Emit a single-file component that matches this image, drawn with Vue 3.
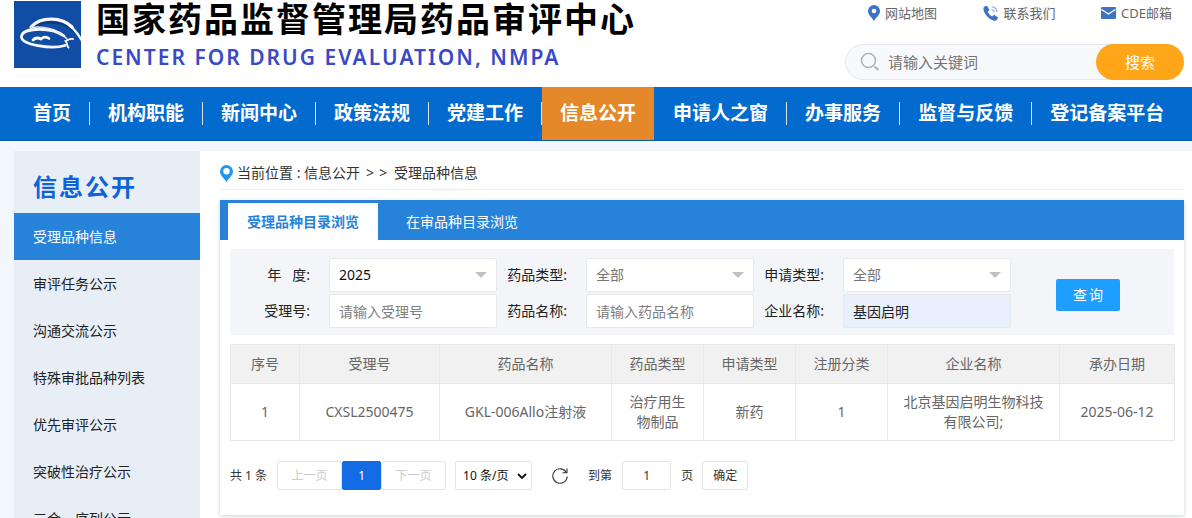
<script setup>
import { ref } from 'vue'

const navItems = ['首页', '机构职能', '新闻中心', '政策法规', '党建工作', '信息公开', '申请人之窗', '办事服务', '监督与反馈', '登记备案平台']
const activeNav = '信息公开'

const sideItems = ['受理品种信息', '审评任务公示', '沟通交流公示', '特殊审批品种列表', '优先审评公示', '突破性治疗公示', '三合一序列公示']
const activeSide = '受理品种信息'

const tabs = ['受理品种目录浏览', '在审品种目录浏览']
const activeTab = ref(0)

const keyword = ref('')
const year = ref('2025')
const drugType = ref('全部')
const applyType = ref('全部')
const acceptNo = ref('')
const drugName = ref('')
const company = ref('基因启明')
const pageSize = ref('10 条/页')
const pageNo = ref('1')

const columns = ['序号', '受理号', '药品名称', '药品类型', '申请类型', '注册分类', '企业名称', '承办日期']
const rows = [
  ['1', 'CXSL2500475', 'GKL-006Allo注射液', '治疗用生物制品', '新药', '1', '北京基因启明生物科技有限公司;', '2025-06-12'],
]
</script>

<template>
  <div class="page">
    <header class="header">
      <svg class="logo" viewBox="0 0 70 67" aria-hidden="true">
        <rect width="67" height="67" fill="#114da4" />
        <g fill="none" stroke-linecap="round">
          <path d="M17 28C29 17 50 19 60 29" stroke="#0a3a80" stroke-width="4" />
          <path d="M17 26C27 15 48 16 58 26" stroke="#f6f8fc" stroke-width="3.200" />
          <path d="M50 20.500C58 25 63 31 67.500 39" stroke="#fff" stroke-width="2.400" />
          <path d="M17 26.500C28 25 43 27 53 38" stroke="#d9e3f3" stroke-width="1.600" />
          <path d="M50 35C38 26 10 26 7.500 35C6 44 38 48.500 51 44.500" stroke="#f6f8fc" stroke-width="2.800" />
          <path d="M59 38C56 37.500 54 39 51.500 40C53.500 42 52.500 44.500 54.500 46.500" stroke="#fff" stroke-width="1.800" />
          <path d="M19 39C22 36 25 37 27 38C30 35.500 33 36 35 37.500" stroke="#fff" stroke-width="2.800" />
        </g>
      </svg>
      <div class="brand">
        <h1>国家药品监督管理局药品审评中心</h1>
        <p>CENTER FOR DRUG EVALUATION, NMPA</p>
      </div>
      <div class="tools">
        <div class="quick">
          <a href="#">
            <svg width="12" height="16" viewBox="0 0 12 16"><path d="M6 0a6 6 0 0 1 6 6c0 4-4 6.500-6 10C4 12.500 0 10 0 6a6 6 0 0 1 6-6Z" fill="#3d73c2" /><circle cx="6" cy="6" r="2.300" fill="#fff" /></svg>
            网站地图
          </a>
          <a href="#">
            <svg width="16" height="16" viewBox="0 0 16 16"><path d="M1.500 1.500 4 .8 6.500 5 4.800 6.800c.8 2 2.400 3.600 4.300 4.600l2-1.600 4 2.700-1.200 2.400c-.6.900-2 1-3.600.5C5.500 14 1.200 9 .5 4.500.3 3 .7 2 1.500 1.500Z" fill="#3d73c2" /><path d="M8.500 4.300c1.500.3 2.500 1.400 2.700 2.900M8.700 1.600c3 .4 5 2.500 5.200 5.400" fill="none" stroke="#8fb0de" stroke-width="1.300" /></svg>
            联系我们
          </a>
          <a href="#">
            <svg width="15" height="12" viewBox="0 0 15 12"><rect width="15" height="12" rx="1" fill="#3d73c2" /><path d="m.5 2.500 7 4.500 7-4.500" fill="none" stroke="#fff" stroke-width="1.300" /></svg>
            CDE邮箱
          </a>
        </div>
        <form class="search" @submit.prevent>
          <svg width="20" height="20" viewBox="0 0 20 20" aria-hidden="true"><circle cx="8.500" cy="8.500" r="7" fill="none" stroke="#b3b3b3" stroke-width="1.600" /><path d="m14.500 14.500 4 3.500" stroke="#b3b3b3" stroke-width="2.200" /></svg>
          <input v-model="keyword" type="text" placeholder="请输入关键词" aria-label="请输入关键词" />
          <button type="submit">搜索</button>
        </form>
      </div>
    </header>

    <nav class="nav">
      <a v-for="item in navItems" :key="item" href="#" :class="{ active: item === activeNav }">{{ item }}</a>
    </nav>

    <div class="body">
      <aside class="side">
        <h2>信息公开</h2>
        <a v-for="item in sideItems" :key="item" href="#" :class="{ active: item === activeSide }">{{ item }}</a>
      </aside>

      <main class="main">
        <div class="crumb">
          <svg width="13" height="17" viewBox="0 0 13 17" aria-hidden="true"><path d="M6.500 0A6.500 6.500 0 0 1 13 6.500C13 10.500 9 13 6.500 17 4 13 0 10.500 0 6.500A6.500 6.500 0 0 1 6.500 0Z" fill="#2196ee" /><circle cx="6.500" cy="6.300" r="3.200" fill="#fff" /></svg>
          <span>当前位置 : <a href="#">信息公开</a></span>
          <span class="arrow first">&gt;</span>
          <span class="arrow">&gt;</span>
          <a href="#">受理品种信息</a>
        </div>

        <section class="panel">
          <div class="tabs">
            <button v-for="(tab, i) in tabs" :key="tab" type="button" :class="{ active: i === activeTab }" @click="activeTab = i">{{ tab }}</button>
          </div>

          <form class="filters" @submit.prevent>
            <div class="fields">
              <div class="field">
                <label for="year">年&nbsp;&nbsp;&nbsp;度:</label>
                <div class="select">
                  <select id="year" v-model="year" class="chosen"><option>2025</option></select>
                  <svg width="12" height="6" viewBox="0 0 12 6"><path d="M0 0h12L6 6Z" fill="#c2c2c2" /></svg>
                </div>
              </div>
              <div class="field">
                <label for="drug-type">药品类型:</label>
                <div class="select">
                  <select id="drug-type" v-model="drugType"><option>全部</option></select>
                  <svg width="12" height="6" viewBox="0 0 12 6"><path d="M0 0h12L6 6Z" fill="#c2c2c2" /></svg>
                </div>
              </div>
              <div class="field">
                <label for="apply-type">申请类型:</label>
                <div class="select">
                  <select id="apply-type" v-model="applyType"><option>全部</option></select>
                  <svg width="12" height="6" viewBox="0 0 12 6"><path d="M0 0h12L6 6Z" fill="#c2c2c2" /></svg>
                </div>
              </div>
              <div class="field">
                <label for="accept-no">受理号:</label>
                <input id="accept-no" v-model="acceptNo" type="text" placeholder="请输入受理号" />
              </div>
              <div class="field">
                <label for="drug-name">药品名称:</label>
                <input id="drug-name" v-model="drugName" type="text" placeholder="请输入药品名称" />
              </div>
              <div class="field">
                <label for="company">企业名称:</label>
                <input id="company" v-model="company" type="text" class="filled" />
              </div>
            </div>
            <button class="query" type="submit">查询</button>
          </form>

          <table class="grid">
            <colgroup>
              <col class="c-no" /><col class="c-accept" /><col class="c-name" /><col class="c-kind" /><col class="c-kind" /><col class="c-kind" /><col class="c-name" /><col />
            </colgroup>
            <thead>
              <tr><th v-for="c in columns" :key="c" scope="col">{{ c }}</th></tr>
            </thead>
            <tbody>
              <tr v-for="row in rows" :key="row[1]"><td v-for="(cell, i) in row" :key="i">{{ cell }}</td></tr>
            </tbody>
          </table>

          <div class="pager">
            <span>共 1 条</span>
            <div class="pages">
              <button type="button" disabled>上一页</button>
              <button type="button" class="current">1</button>
              <button type="button" disabled>下一页</button>
            </div>
            <div class="size">
              <select v-model="pageSize" aria-label="每页条数"><option>10 条/页</option></select>
              <svg width="10" height="6" viewBox="0 0 10 6"><path d="m1 1 4 4 4-4" fill="none" stroke="#111" stroke-width="1.800" /></svg>
            </div>
            <button class="refresh" type="button" aria-label="刷新">
              <svg width="16" height="16" viewBox="0 0 16 16"><path d="M14.300 4.500A7.200 7.200 0 1 0 15.200 8.500" fill="none" stroke="#333" stroke-width="1.100" /><path d="M15 .5V4.800H10.500" fill="none" stroke="#333" stroke-width="1.100" /></svg>
            </button>
            <label for="page-no">到第</label>
            <input id="page-no" v-model="pageNo" type="text" />
            <span>页</span>
            <button class="go" type="button">确定</button>
          </div>
        </section>
      </main>
    </div>
  </div>
</template>

<style>
body {
  background: #fff;
}
</style>

<style scoped>
* {
  box-sizing: border-box;
}
.page {
  min-height: 100vh;
  display: flex;
  flex-direction: column;
  font-family: "Noto Sans", "Noto Sans CJK SC", sans-serif;
  font-size: 14px;
  line-height: 20px;
  color: #333;
}
input, select, button {
  font-family: inherit;
  font-size: inherit;
  line-height: 20px;
  margin: 0;
  outline: none;
}
button {
  cursor: pointer;
  white-space: nowrap;
}
a {
  color: inherit;
  text-decoration: none;
}
h1, h2, p {
  margin: 0;
}
svg {
  display: block;
  flex: none;
}

.header {
  display: flex;
  align-items: flex-start;
  padding: 0 8px 7px 14px;
}
.logo {
  width: 70px;
  height: 67px;
  margin-top: 1px;
}
.brand {
  margin-left: 12px;
  white-space: nowrap;
}
.brand h1 {
  font-size: 34px;
  line-height: 38px;
  font-weight: 700;
  letter-spacing: 2px;
  color: #000;
}
.brand p {
  margin-top: 5px;
  font-size: 21px;
  line-height: 28px;
  font-weight: 600;
  letter-spacing: 2px;
  color: #3a49c6;
}
.tools {
  width: 339px;
  margin-left: auto;
}
.quick {
  display: flex;
  justify-content: space-between;
  padding: 3px 12px 0 23px;
  font-size: 13px;
  color: #666;
}
.quick a {
  display: flex;
  align-items: center;
  gap: 5px;
}
.search {
  display: flex;
  align-items: center;
  height: 36px;
  margin-top: 21px;
  padding-left: 14px;
  border: 1px solid #e4e6ea;
  border-radius: 18px;
  background: #f7f9fc;
}
.search input {
  flex: 1;
  min-width: 0;
  padding: 0 0 0 8px;
  border: 0;
  background: transparent;
  font-size: 15px;
}
.search input::placeholder {
  color: #757575;
}
.search button {
  width: 88px;
  height: 36px;
  padding: 0;
  margin-right: -1px;
  border: 0;
  border-radius: 18px;
  background: #ffa519;
  color: #fff;
  font-size: 15px;
}

.nav {
  display: flex;
  height: 54px;
  padding-left: 15px;
  background: #046bce;
  border-bottom: 1px solid #0a5cb0;
}
.nav a {
  display: flex;
  align-items: center;
  padding: 0 18px 1px;
  color: #fff;
  font-size: 19px;
  font-weight: 700;
  white-space: nowrap;
}
.nav a::after {
  content: "";
  width: 1px;
  height: 23px;
  margin-right: -19px;
  margin-left: 18px;
  background: #d5e6f7;
}
.nav a + a {
  margin-left: 1px;
}
.nav a.active {
  background: #e48829;
}
.nav a.active::after,
.nav a:last-child::after {
  background: transparent;
}

.body {
  flex: 1;
  display: flex;
  padding: 10px 0 0 14px;
  background: #f2f7fe;
}
.side {
  flex: none;
  width: 186px;
  background: #e7eef6;
}
.side h2 {
  padding: 20px 19px 10px;
  font-size: 24px;
  line-height: 32px;
  font-weight: 700;
  letter-spacing: 2px;
  color: #0f63d8;
}
.side a {
  display: block;
  padding: 0 19px;
  line-height: 47px;
  color: #222;
}
.side a.active {
  background: #2783da;
  color: #fff;
}
.main {
  flex: 1;
  min-width: 0;
  padding: 0 8px 10px 20px;
  background: #fff;
}
.crumb {
  display: flex;
  align-items: center;
  height: 39px;
  padding-top: 6px;
  border-bottom: 1px solid #eceff3;
}
.crumb svg {
  margin-right: 4px;
}
.arrow {
  margin-right: 7px;
}
.arrow.first {
  margin: 0 5px 0 6px;
}

.panel {
  margin-top: 10px;
  padding-bottom: 25px;
  background: #fff;
  box-shadow: 0 1px 4px #c9d4e0;
}
.tabs {
  display: flex;
  height: 40px;
  padding: 3px 0 0 8px;
  background: #2783da;
}
.tabs button {
  width: 150px;
  padding: 0;
  border: 0;
  background: transparent;
  color: #fff;
}
.tabs button + button {
  margin-left: 9px;
}
.tabs button.active {
  background: #fff;
  color: #2783da;
  font-weight: 700;
}
.filters {
  display: flex;
  align-items: center;
  margin: 9px 10px 0;
  padding: 9px 0 7px 10px;
  background: #f3f5f9;
}
.fields {
  display: grid;
  grid-template-columns: repeat(3, 257px);
  row-gap: 2px;
}
.field {
  display: flex;
  align-items: center;
}
.field label {
  width: 89px;
  padding-right: 19px;
  text-align: right;
  color: #222;
}
.field > input,
.select {
  width: 168px;
  height: 34px;
}
.field input,
.select select {
  padding: 0 9px;
  border: 1px solid #e6e8eb;
  border-radius: 2px;
  background: #fff;
  color: #757575;
}
.field input::placeholder {
  color: #808080;
}
.select {
  position: relative;
}
.select select {
  width: 100%;
  height: 100%;
  appearance: none;
}
.select .chosen {
  color: #111;
}
.select svg {
  position: absolute;
  right: 10px;
  top: 14px;
  pointer-events: none;
}
.field input.filled {
  background: #e8f0fe;
  color: #222;
}
.query {
  width: 64px;
  height: 32px;
  margin: 3px 0 0 45px;
  padding: 0 0 0 2px;
  border: 0;
  border-radius: 2px;
  background: #1e9fff;
  color: #fff;
  letter-spacing: 2px;
}

.grid {
  width: calc(100% - 19px);
  margin: 9px 9px 0 10px;
  table-layout: fixed;
  border-collapse: collapse;
  color: #666;
}
.c-no { width: 69px; }
.c-accept { width: 140px; }
.c-name { width: 172px; }
.c-kind { width: 92px; }
.grid th,
.grid td {
  padding: 9px 15px;
  border: 1px solid #e8e8e8;
  font-weight: 400;
  text-align: center;
}
.grid th {
  background: #f1f1f1;
}
.grid td {
  padding: 8px 15px;
}

.pager {
  display: flex;
  align-items: center;
  margin: 20px 10px 0;
  font-size: 12px;
  white-space: nowrap;
}
.pager button,
.pager input,
.pager select {
  height: 29px;
  padding: 0;
  border: 1px solid #e4e4e4;
  border-radius: 2px;
  background: #fff;
  color: #333;
  text-align: center;
}
.pages {
  display: flex;
  margin-left: 10px;
}
.pages button {
  width: 65px;
}
.pager .pages button:disabled {
  color: #ccc;
}
.pager .pages .current {
  width: 39px;
  border-color: #146be6;
  background: #146be6;
  color: #fff;
}
.size {
  position: relative;
  margin: 0 20px 0 9px;
}
.pager .size select {
  width: 77px;
  padding-left: 7px;
  appearance: none;
  text-align: left;
  color: #111;
}
.size svg {
  position: absolute;
  right: 5px;
  top: 12px;
  pointer-events: none;
}
.pager .refresh {
  margin-right: 20px;
  border: 0;
}
.pager input {
  width: 49px;
  margin: 0 10px;
}
.pager .go {
  width: 46px;
  margin-left: 9px;
}
</style>
